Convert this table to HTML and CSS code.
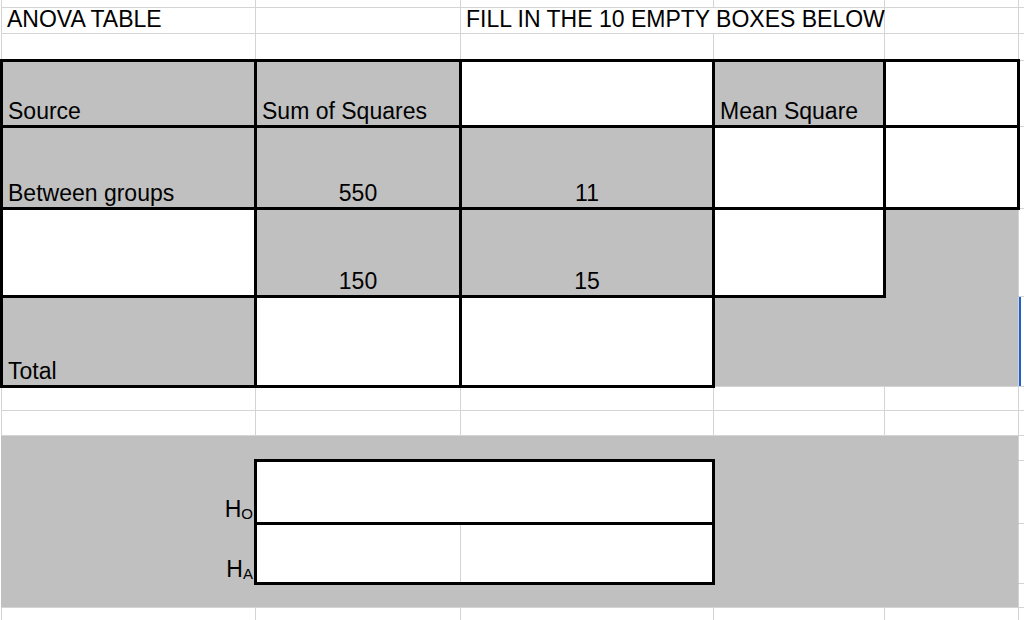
FILE: index.html
```html
<!DOCTYPE html>
<html lang="en">
<head>
<meta charset="utf-8">
<title>ANOVA TABLE</title>
<link rel="stylesheet" href="styles.css">
</head>
<body>
<div class="viewport">
<table class="sheet">
  <colgroup>
    <col class="ca"><col class="cb"><col class="cc"><col class="cd"><col class="ce"><col class="cf">
  </colgroup>
  <tr class="r0"><td></td><td></td><td></td><td></td><td></td><td></td></tr>
  <tr class="r1"><td class="txt">ANOVA TABLE</td><td></td><td colspan="2" class="txt">FILL IN THE 10 EMPTY BOXES BELOW</td><td></td><td></td></tr>
  <tr class="r2"><td></td><td></td><td></td><td></td><td></td><td></td></tr>
  <tr class="r3">
    <td class="box grey txt">Source</td>
    <td class="box grey txt">Sum of Squares</td>
    <td class="box"></td>
    <td class="box grey txt">Mean Square</td>
    <td class="box"></td>
    <td></td>
  </tr>
  <tr class="r4">
    <td class="box grey txt">Between groups</td>
    <td class="box grey txt num">550</td>
    <td class="box grey txt num">11</td>
    <td class="box"></td>
    <td class="box"></td>
    <td></td>
  </tr>
  <tr class="r5">
    <td class="box"></td>
    <td class="box grey txt num">150</td>
    <td class="box grey txt num">15</td>
    <td class="box"></td>
    <td class="fill edge-r"></td>
    <td></td>
  </tr>
  <tr class="r6">
    <td class="box grey txt">Total</td>
    <td class="box"></td>
    <td class="box"></td>
    <td colspan="2" class="fill edge-r edge-b"></td>
    <td class="selected"></td>
  </tr>
  <tr class="r7"><td></td><td></td><td></td><td></td><td></td><td></td></tr>
  <tr class="r8"><td></td><td></td><td></td><td></td><td></td><td></td></tr>
  <tr class="r9"><td colspan="5" class="fill edge-r"></td><td></td></tr>
  <tr class="r10">
    <td class="fill txt label">H<span class="sub">O</span></td>
    <td colspan="2" class="box"></td>
    <td colspan="2" class="fill edge-r"></td>
    <td></td>
  </tr>
  <tr class="r11">
    <td class="fill txt label">H<span class="sub">A</span></td>
    <td class="box open-r"></td>
    <td class="box open-l"></td>
    <td colspan="2" class="fill edge-r"></td>
    <td></td>
  </tr>
  <tr class="r12"><td colspan="5" class="fill edge-r edge-b"></td><td></td></tr>
  <tr class="r13"><td></td><td></td><td></td><td></td><td></td><td></td></tr>
</table>
</div>
</body>
</html>
```
FILE: styles.css
```css
html, body {
  margin: 0;
  padding: 0;
  background: #ffffff;
  overflow: hidden;
}

.viewport {
  width: 1024px;
  height: 620px;
  overflow: hidden;
}

.sheet {
  border-collapse: collapse;
  table-layout: fixed;
  width: 1057px;
  margin-left: 0;
  font-family: "Liberation Sans", Arial, Helvetica, sans-serif;
  font-size: 23px;
  color: #000000;
}

.ca { width: 254px; }
.cb { width: 205px; }
.cc { width: 253px; }
.cd { width: 171px; }
.ce { width: 134px; }
.cf { width: 40px; }

.sheet td {
  border: 1px solid #d4d4d4;
  padding: 0 4px 2px 4px;
  line-height: 1;
  vertical-align: bottom;
  white-space: nowrap;
  overflow: visible;
}

.r0 td { border-top: none; }

.r0 { height: 7px; }
.r1 { height: 26px; }
.r2 { height: 27px; }
.r3 { height: 66px; }
.r4 { height: 82px; }
.r5 { height: 88px; }
.r6 { height: 90px; }
.r7 { height: 24px; }
.r8 { height: 25px; }
.r9 { height: 25px; }
.r10 { height: 63px; }
.r11 { height: 60px; }
.r12 { height: 24px; }
.r13 { height: 20px; }

.sheet td.txt { padding-left: 5px; }

.sheet td.box {
  border: 3px solid #000000;
}

.sheet td.grey {
  background: #c0c0c0;
}

.sheet td.fill {
  background: #c0c0c0;
  border: 1px solid #c0c0c0;
}

.sheet td.fill.edge-r { border-right-color: #d4d4d4; }
.sheet td.fill.edge-b { border-bottom-color: #d4d4d4; }

.sheet td.box.open-r { border-right: 1px solid #d4d4d4; }
.sheet td.box.open-l { border-left: 1px solid #d4d4d4; }

.sheet td.num {
  text-align: center;
  padding-left: 0;
  padding-right: 0;
}

.sheet td.label {
  text-align: right;
  padding-right: 1px;
  padding-bottom: 2px;
}

.sub {
  font-size: 15px;
  vertical-align: -2px;
}

.sheet td.selected {
  box-shadow: inset 2px 0 0 #1a62d6;
}
```
